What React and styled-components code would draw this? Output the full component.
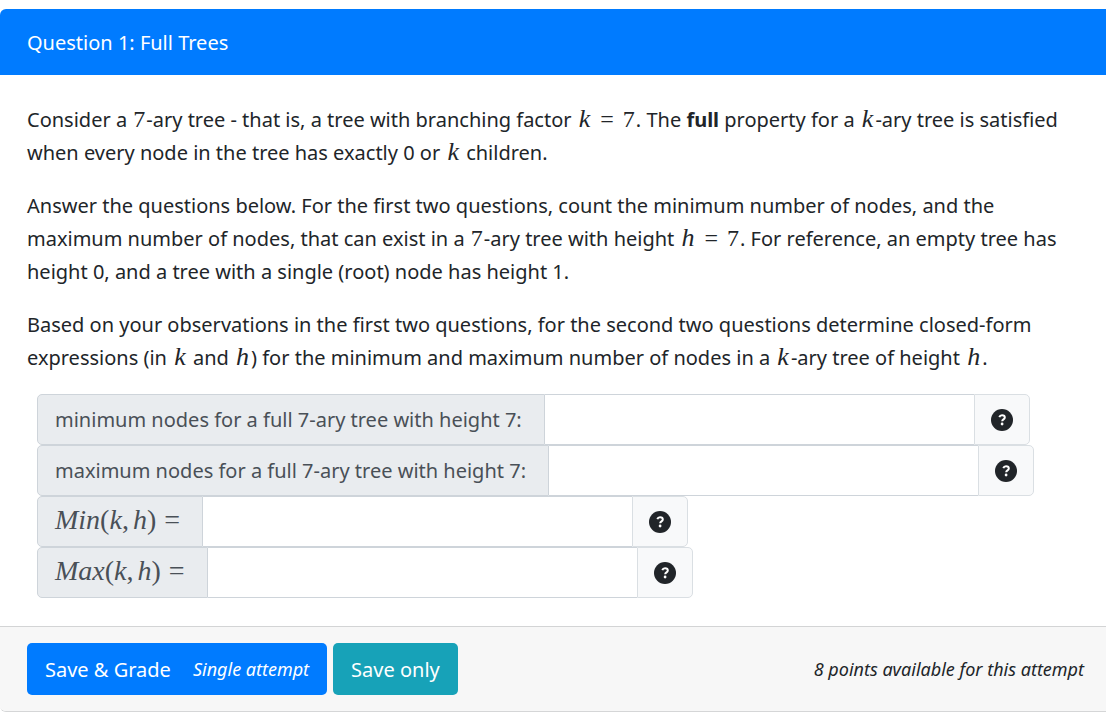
import React from "react";
import styled, { createGlobalStyle } from "styled-components";

const GlobalStyle = createGlobalStyle`
  *, *::before, *::after { box-sizing: border-box; }
  body {
    margin: 0;
    background: #fff;
    color: #212529;
    font-family: "Noto Sans", "Open Sans", sans-serif;
    font-size: 20px;
    line-height: 33px;
  }
`;

const Card = styled.section`
  margin: 9px 0 8px;
  border-bottom: 1px solid #d5d6d7;
  border-radius: 6px 0 0 6px;
  overflow: hidden;
`;

const CardHeader = styled.h1`
  margin: 0;
  padding: 17px 27px 16px;
  background: #007bff;
  color: #fff;
  font-size: 20px;
  font-weight: 400;
`;

const CardBody = styled.div`
  padding: 28px 27px 28px;
`;

const Paragraph = styled.p`
  margin: 0 0 20px;
`;

const Variable = styled.span`
  margin: 0 2px;
  font-family: "Liberation Serif", serif;
  font-size: 26px;
  line-height: 1;
  font-style: italic;
`;

const Numeral = styled.span`
  margin: 0 1px;
  font-family: "Liberation Serif", serif;
  font-size: 24px;
  line-height: 1;
`;

const Relation = styled(Numeral)`
  margin: 0 8px;
`;

const Formula = styled.span`
  display: flex;
  align-items: baseline;
  padding-bottom: 4px;
  font-family: "Liberation Serif", serif;
  font-size: 28px;
  line-height: 1;
`;

const Arguments = styled.span`
  display: flex;
  gap: 4px;
`;

const Equals = styled.span`
  margin-left: 8px;
`;

const Fields = styled.form`
  display: flex;
  flex-direction: column;
  align-items: flex-start;
  padding: 0 10px;
`;

const FieldGroup = styled.div`
  display: flex;
  height: 51px;
  max-width: 100%;
`;

const FieldLabel = styled.label`
  display: flex;
  align-items: center;
  padding: 0 22px 0 17px;
  border: 1px solid #ced4da;
  border-radius: 5px 0 0 5px;
  background: #e9ecef;
  color: #495057;
  white-space: nowrap;
`;

const FieldInput = styled.input`
  flex: 0 1 429px;
  width: 429px;
  min-width: 0;
  padding: 0 16px;
  border: 1px solid #ced4da;
  border-width: 1px 0;
  border-radius: 0;
  background: #fff;
  color: #495057;
  font: inherit;
`;

const HelpButton = styled.button`
  display: flex;
  align-items: center;
  justify-content: center;
  width: 56px;
  padding: 0;
  border: 1px solid #dadfe3;
  border-radius: 0 5px 5px 0;
  background: #f8f9fa;
  color: #212529;
  cursor: pointer;
`;

const CardFooter = styled.footer`
  display: flex;
  align-items: center;
  justify-content: space-between;
  padding: 16px 22px 16px 27px;
  border-top: 1px solid #d3d4d5;
  background: #f7f7f7;
`;

const Actions = styled.div`
  display: flex;
  gap: 6px;
`;

const ActionButton = styled.button`
  display: flex;
  align-items: center;
  gap: 22px;
  height: 52px;
  padding: 0 18px;
  border: 0;
  border-radius: 5px;
  background: ${(p) => (p.$info ? "#17a2b8" : "#007bff")};
  color: #fff;
  font: inherit;
  cursor: pointer;
`;

const Note = styled.em`
  font-size: 18px;
`;

function HelpIcon() {
  return (
    <svg width="22" height="22" viewBox="0 0 22 22" aria-hidden="true">
      <circle cx="11" cy="11" r="11" fill="currentColor" />
      <path
        d="M8.3 8.2C8.8 6.8 9.7 6.2 11 6.2c1.6 0 2.8.9 2.8 2.3 0 1.9-2.6 1.9-2.6 3.8"
        fill="none"
        stroke="#fff"
        strokeWidth="2"
      />
      <circle cx="11.1" cy="15" r="1.4" fill="#fff" />
    </svg>
  );
}

function FunctionLabel({ name }) {
  return (
    <Formula>
      <i>{name}</i>(
      <Arguments>
        <span>
          <i>k</i>,
        </span>
        <i>h</i>
      </Arguments>
      )<Equals>=</Equals>
    </Formula>
  );
}

function Field({ id, label }) {
  return (
    <FieldGroup>
      <FieldLabel htmlFor={id}>{label}</FieldLabel>
      <FieldInput id={id} type="text" />
      <HelpButton type="button" aria-label="Help">
        <HelpIcon />
      </HelpButton>
    </FieldGroup>
  );
}

export default function App() {
  return (
    <>
      <GlobalStyle />
      <Card>
        <CardHeader>Question 1: Full Trees</CardHeader>
        <CardBody>
          <Paragraph>
            Consider a <Numeral>7</Numeral>-ary tree - that is, a tree with branching factor{" "}
            <Variable>k</Variable>
            <Relation>=</Relation>
            <Numeral>7</Numeral>. The <strong>full</strong> property for a <Variable>k</Variable>-ary tree is
            satisfied
            <br />
            when every node in the tree has exactly 0 or <Variable>k</Variable> children.
          </Paragraph>
          <Paragraph>
            Answer the questions below. For the first two questions, count the minimum number of nodes, and the
            <br />
            maximum number of nodes, that can exist in a <Numeral>7</Numeral>-ary tree with height{" "}
            <Variable>h</Variable>
            <Relation>=</Relation>
            <Numeral>7</Numeral>. For reference, an empty tree has
            <br />
            height 0, and a tree with a single (root) node has height 1.
          </Paragraph>
          <Paragraph>
            Based on your observations in the first two questions, for the second two questions determine closed-form
            <br />
            expressions (in <Variable>k</Variable> and <Variable>h</Variable>) for the minimum and maximum number of
            nodes in a <Variable>k</Variable>-ary tree of height <Variable>h</Variable>.
          </Paragraph>
          <Fields>
            <Field id="min-nodes" label="minimum nodes for a full 7-ary tree with height 7:" />
            <Field id="max-nodes" label="maximum nodes for a full 7-ary tree with height 7:" />
            <Field id="min-formula" label={<FunctionLabel name="Min" />} />
            <Field id="max-formula" label={<FunctionLabel name="Max" />} />
          </Fields>
        </CardBody>
        <CardFooter>
          <Actions>
            <ActionButton type="button">
              Save &amp; Grade <Note>Single attempt</Note>
            </ActionButton>
            <ActionButton type="button" $info>
              Save only
            </ActionButton>
          </Actions>
          <Note>8 points available for this attempt</Note>
        </CardFooter>
      </Card>
    </>
  );
}
